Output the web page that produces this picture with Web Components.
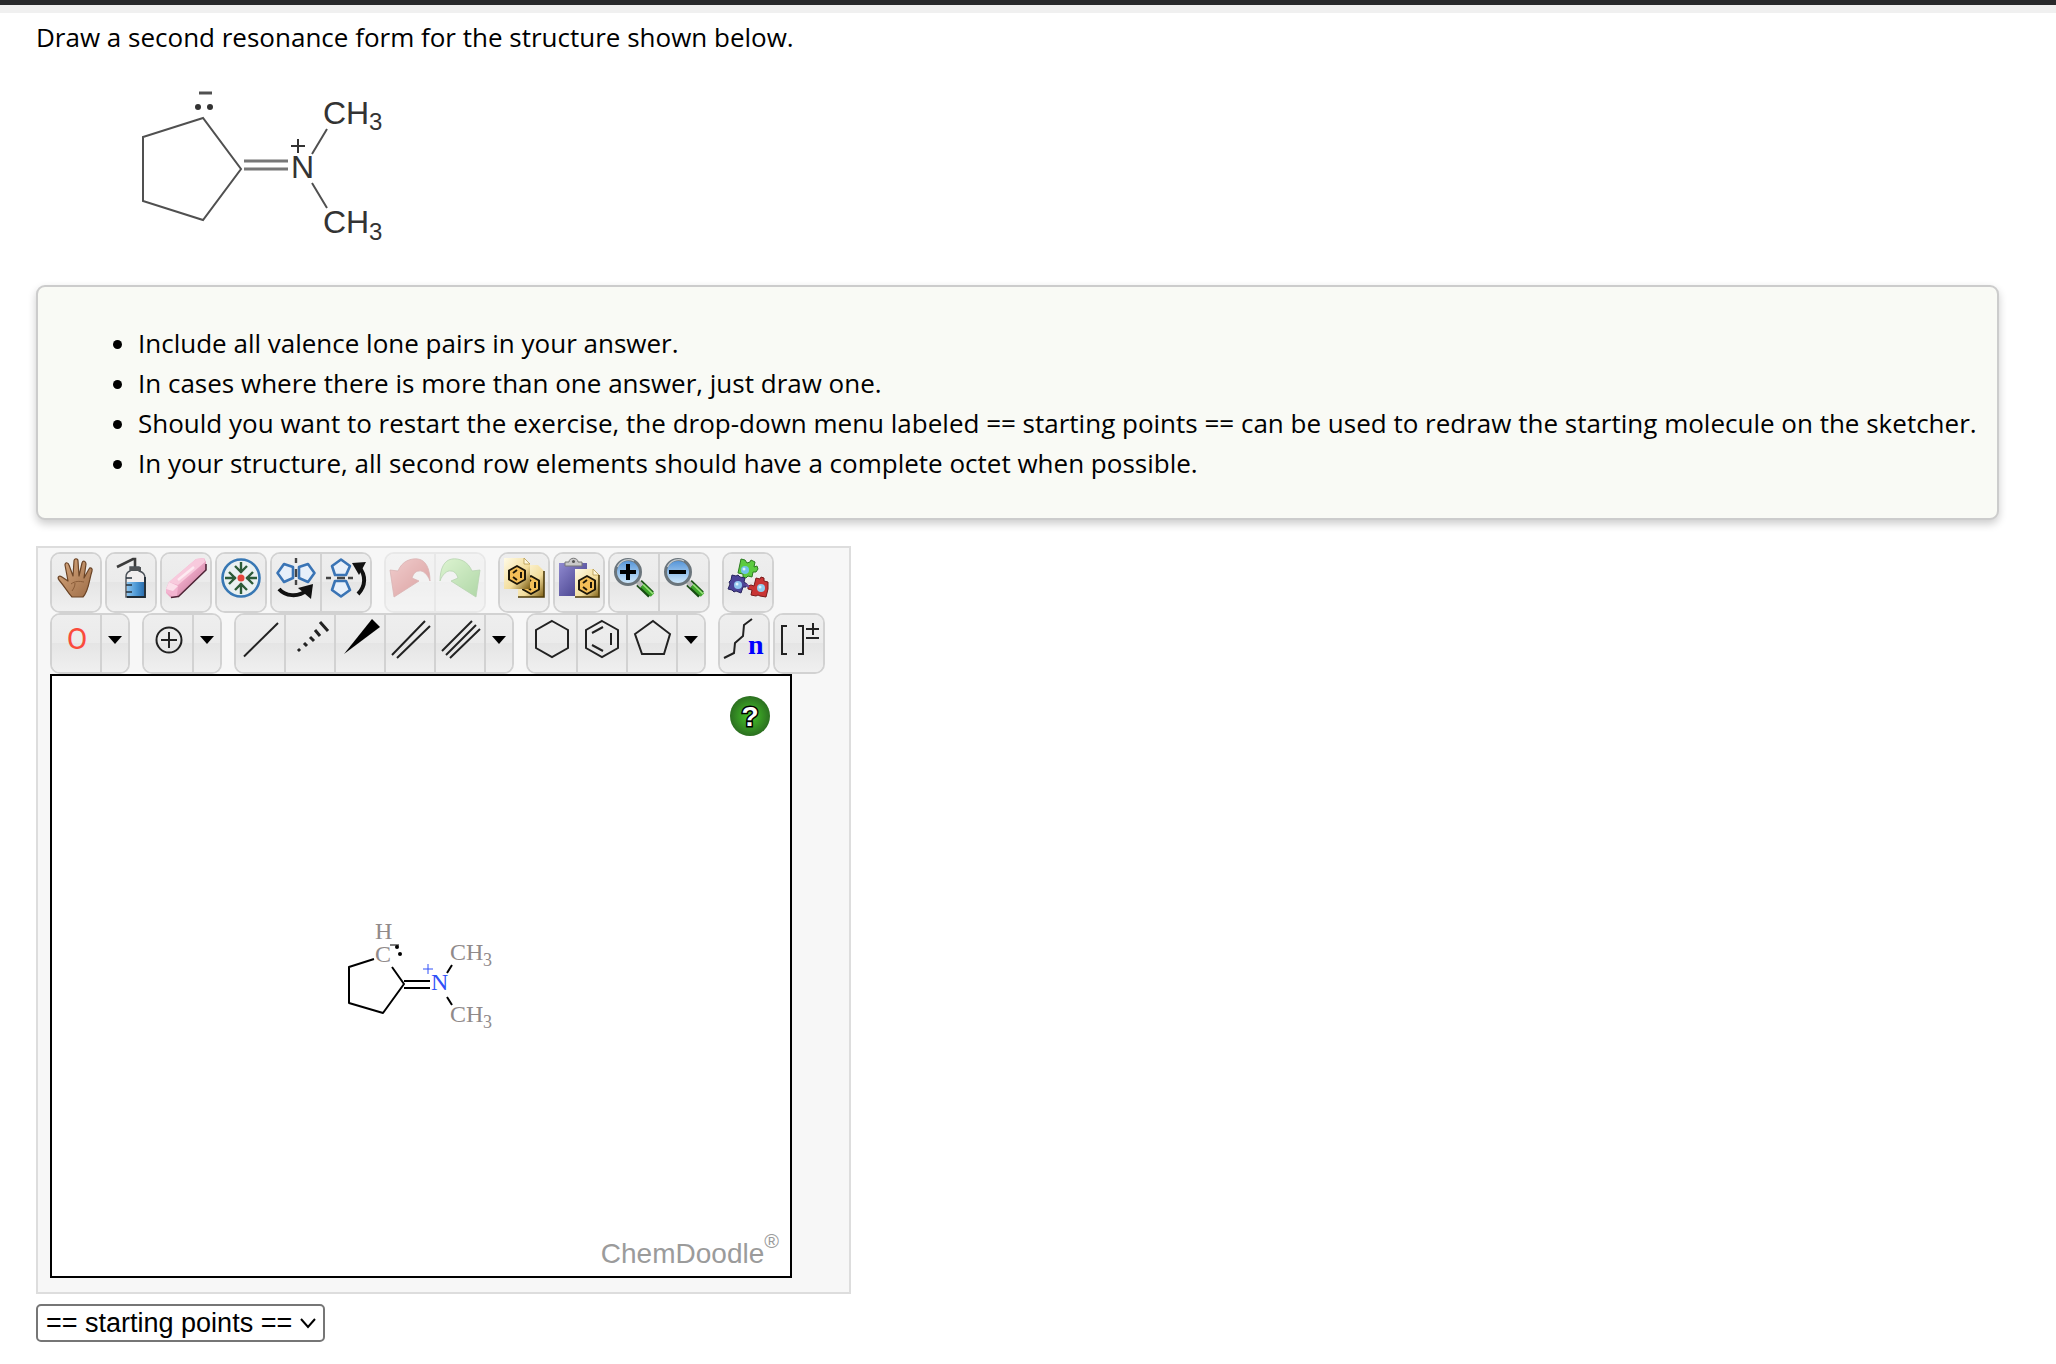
<!DOCTYPE html>
<html lang="en">
<head>
<meta charset="utf-8">
<title>Resonance form exercise</title>
<style>
  body {
    margin: 0;
    background: #fff;
    color: #000;
    font-family: "Open Sans", "Noto Sans", sans-serif;
    font-size: 26px;
    line-height: 40px;
  }
</style>
</head>
<body>
<exercise-page>
  <p slot="question">Draw a second resonance form for the structure shown below.</p>
  <structure-figure slot="figure"></structure-figure>
  <hint-box slot="hints">
    <ul>
      <li>Include all valence lone pairs in your answer.</li>
      <li>In cases where there is more than one answer, just draw one.</li>
      <li>Should you want to restart the exercise, the drop-down menu labeled == starting points == can be used to redraw the starting molecule on the sketcher.</li>
      <li>In your structure, all second row elements should have a complete octet when possible.</li>
    </ul>
  </hint-box>
  <molecule-sketcher slot="sketcher"></molecule-sketcher>
  <starting-points slot="sketcher"></starting-points>
</exercise-page>

<script>
const pentagonPair = `
  <g fill="#e8f0fa" stroke="#3a74b5" stroke-width="2.600" stroke-linejoin="round">
    <path d="M1.500 15 8 6l9 3v11l-9 4z"/><path d="M38.500 15 32 6l-9 3v11l9 4z"/>
  </g>
  <path d="M20 0v5M20 11v8M20 22v5" stroke="#444" stroke-width="2.400"/>`;

const benzene = (x, y) => `
  <g transform="translate(${x} ${y})" stroke="#1c1608" stroke-width="2" stroke-linejoin="round">
    <path d="M0-9 8-4.500v9L0 9l-8-4.500v-9z" fill="#f3be58"/>
    <path d="M4-3v6M-4-2 0-5M-4 2 0 5" fill="none"/>
  </g>`;

const lens = `
  <path d="M25 25 37 36.500" stroke="#174d12" stroke-width="8"/>
  <path d="M23 23l5 5" stroke="#b9b9b9" stroke-width="5"/>
  <path d="M28.500 27.500 38.500 37" stroke="#3da42b" stroke-width="5"/>
  <path d="M29 26.500l10 9.500" stroke="#9be07d" stroke-width="1.600"/>
  <circle cx="14" cy="14" r="12.500" fill="url(#glass)" stroke="#6b757c" stroke-width="3"/>
  <path d="M3.500 9A12 12 0 0 1 20 3" fill="none" stroke="#c3cacf" stroke-width="1.400"/>`;

const defs = `
  <defs>
    <linearGradient id="skin" x2="1" y2="1"><stop offset="0" stop-color="#d9aa80"/><stop offset="1" stop-color="#9c6b45"/></linearGradient>
    <linearGradient id="liquid"><stop offset="0" stop-color="#8cc4ee"/><stop offset=".6" stop-color="#4794d2"/><stop offset="1" stop-color="#2d6fae"/></linearGradient>
    <linearGradient id="pink" x2="1" y2="1"><stop offset="0" stop-color="#fbe0ec"/><stop offset=".45" stop-color="#f0acc9"/><stop offset="1" stop-color="#b5668b"/></linearGradient>
    <linearGradient id="red" x2="1" y2="1"><stop offset="0" stop-color="#e88f8f"/><stop offset="1" stop-color="#b02020"/></linearGradient>
    <linearGradient id="green" x2="1" y2="1"><stop offset="0" stop-color="#b8f09a"/><stop offset="1" stop-color="#46a830"/></linearGradient>
    <linearGradient id="gold" x2="1" y2="1"><stop offset="0" stop-color="#fffbe6"/><stop offset=".6" stop-color="#f3dd9c"/><stop offset="1" stop-color="#7a5c12"/></linearGradient>
    <linearGradient id="board" x2="1" y2="1"><stop offset="0" stop-color="#8f89cf"/><stop offset="1" stop-color="#3d3884"/></linearGradient>
    <linearGradient id="glass" x2="0" y2="1"><stop offset="0" stop-color="#4f90d6"/><stop offset="1" stop-color="#d4ecfd"/></linearGradient>
  </defs>`;

const icons = {
  hand: `
    <path d="M16 39C12 35 9 29 3 22c-2-3 0-5 3-3l6 4L9 7c0-3 3-3 4 0l4 11 1-15c0-3 4-3 4 0l1 15 3-13c1-3 4-2 4 1l-2 14 5-9c1-2 4-1 3 2-3 9-3 20-9 26z" fill="url(#skin)" stroke="#6b4426" stroke-width="1.200" stroke-linejoin="round"/>
    <path d="M15 26c4-3 8-3 13-2M16 33c2-3 3-5 3-8" fill="none" stroke="#8a5c38"/>`,
  bottle: `
    <path d="M6 9 22 1h2v11" fill="none" stroke="#3c3c3c" stroke-width="2.600"/>
    <path d="M19 9h9v4c4 1 6 4 6 7v19H15V19c0-3 1-5 4-6z" fill="#f1eeee" stroke="#4a5158" stroke-width="1.400"/>
    <path d="M16 24h17v14H16z" fill="url(#liquid)"/>
    <path d="M19 9h11v4H19z" fill="#505356"/>
    <path d="M34 19v20H16" fill="none" stroke="#1f2a33" stroke-width="1.800"/>
    <path d="M15 20h6M15 27h6M15 34h6" stroke="#26323c" stroke-width="1.600"/>`,
  eraser: `
    <path d="M0 31 3 24 30 1l8-1 2 4v8L12 39l-7 1-5-5z" fill="url(#pink)"/>
    <path d="M3 24 30 1l8-1 1 4L12 27z" fill="#f8cadd"/>
    <path d="M3 24l9 4-1 10-4 1-7-5v-3z" fill="#f3b4d0"/>
    <path d="M0 31l3-7 9 4-5 5z" fill="#fbdfea"/>
    <path d="M12 39 40 12V6M5 39.500l7-1" fill="none" stroke="#4d2436" stroke-width="1.600"/>
    <path d="M12 22 28 9" stroke="#fdeaf1" stroke-width="2.400"/>`,
  clean: `
    <circle cx="20" cy="20" r="18.500" fill="#eaf1f1" stroke="#3878b4" stroke-width="2.600"/>
    <g fill="none" stroke="#2c5b38" stroke-width="2.400">
      <path d="M20 4v11M14 8l6 6 6-6M20 36V25M14 32l6-6 6 6M4 20h11M8 14l6 6-6 6M36 20H25M32 14l-6 6 6 6"/>
    </g>
    <circle cx="20" cy="20" r="3.500" fill="#e5453b"/>`,
  flipH: pentagonPair + `
    <path d="M3 31C9 38 22 40 31 32" fill="none" stroke="#111" stroke-width="4"/>
    <path d="M22 30l15-4-2 15z" fill="#111"/>`,
  flipV: `
    <g transform="matrix(0 1 1 0 0 0)">${pentagonPair}</g>
    <path d="M32 36C40 28 40 17 33 9" fill="none" stroke="#111" stroke-width="4"/>
    <path d="M26 5l14-1-7 13z" fill="#111"/>`,
  undo: `<path d="M0 12l8 1C12 3 21 0 28 1c8 1 12 10 12 22-2-6-7-11-11-10-4 0-6 4-7 7l7 3L4 39z" fill="url(#red)" stroke="#b05050" stroke-width=".8"/>`,
  redo: `<path d="M40 12l-8 1C28 3 19 0 12 1 4 2 0 11 0 23c2-6 7-11 11-10 4 0 6 4 7 7l-7 3 25 16z" fill="url(#green)" stroke="#58a048" stroke-width=".8"/>`,
  copy: `
    <path d="M14 7h20l6 6v26H14z" fill="url(#gold)"/><path d="M14 39h26V13" fill="none" stroke="#4e3b0a" stroke-width="1.600"/>` +
    benzene(27, 27) + `
    <path d="M0 0h20l6 6v25H0z" fill="url(#gold)"/><path d="M20 0v6h6z" fill="#fff8dd" stroke="#b69a50" stroke-width=".8"/>` +
    benzene(13, 17),
  paste: `
    <path d="M0 5h28v33H0z" fill="url(#board)"/>
    <path d="M6 8V4h4c0-5 9-5 9 0h4v4z" fill="#c9c9c9" stroke="#777"/><circle cx="14.500" cy="3.500" r="1.500" fill="#555"/>
    <path d="M16 11h18l6 6v22H16z" fill="url(#gold)"/><path d="M34 11v6h6z" fill="#fff8dd" stroke="#b69a50" stroke-width=".8"/>
    <path d="M16 39h24V17" fill="none" stroke="#4e3b0a" stroke-width="1.600"/>` +
    benzene(28, 27),
  zoomIn: lens + `<path d="M14 6v16M6 14h16" stroke="#000" stroke-width="4"/>`,
  zoomOut: lens + `<path d="M5 14h17" stroke="#000" stroke-width="4"/>`,
  templates: `
    <path d="M13 1l4 1 2 3 3-1 1-2 4 2-1 5 3-1 1 3-2 3-3 0-1 5-4-1-2 2-3-1 0-3-5-1z" fill="#5ccb40" stroke="#2c7a20"/>
    <path d="M4 17l4 1 2-1 2 2 5 1-1 4 3 2-1 3-3 0-2 6-5-2-2 1-2-2-4-1 2-5-1-2 2-2z" fill="#4c4498" stroke="#28235e"/>
    <path d="M28 20l4 1 1-2 3 1 0 3 4 1v7l-2 8-6-1-2-1-2 1-5-1 1-5-4-1 0-3 3-1 3 1z" fill="#c93434" stroke="#781919"/>
    <path d="M18 26l3 3" stroke="#6c4a9a" stroke-width="2"/>
    <circle cx="17" cy="12" r="4" fill="#72c3e8"/><circle cx="10" cy="27" r="4" fill="#8fc4ef"/><circle cx="33" cy="30" r="4" fill="#8fcdee"/>
    <circle cx="16" cy="11" r="1.500" fill="#d8f1fb"/><circle cx="9" cy="26" r="1.500" fill="#e0f1fc"/><circle cx="32" cy="29" r="1.500" fill="#e0f1fc"/>`,
  atom: `<text x="21" y="30" text-anchor="middle" font-family="Roboto, sans-serif" font-size="30" fill="#fa4b3c">O</text>`,
  arrow: `<path d="M2 17h14l-7 8z"/>`,
  charge: `<g fill="none" stroke="#222" stroke-width="2"><circle cx="21" cy="21" r="12.500"/><path d="M21 13v16M13 21h16"/></g>`,
  single: `<path d="M4 37.500 38 4" stroke="#222" stroke-width="2"/>`,
  recessed: `<path d="M8 30l2 2M14 24l3 3M20 18l4 4M25 11l5 6M30 3l8 9" stroke="#222" stroke-width="3"/>`,
  wedge: `<path d="M4 35 32 0l8 8z"/>`,
  double: `<path d="M2 36 35 2M7 39 40 7" stroke="#222" stroke-width="2"/>`,
  triple: `<path d="M2 32 32 2M6 36 36 6M10 39 40 10" stroke="#222" stroke-width="2"/>`,
  hexagon: `<path d="M20 2l16 9v18l-16 9-16-9V11z" fill="none" stroke="#222" stroke-width="2"/>`,
  aromatic: `<path d="M20 2l16 9v18l-16 9-16-9V11zM29 14v12M10 14l11-6M10 26l11 6" fill="none" stroke="#222" stroke-width="2"/>`,
  pentagon: `<path d="M21 2l17 13-6 20H10L3 15z" fill="none" stroke="#222" stroke-width="2"/>`,
  chain: `
    <path d="M0 39l10-5 1-10 8-7 1-11 8-6" fill="none" stroke="#222" stroke-width="2"/>
    <text x="24" y="35" font-family="Liberation Serif, serif" font-weight="bold" font-size="28" fill="#00f">n</text>`,
  bracket: `
    <path d="M8 7H3v28h5M19 7h5v28h-5" fill="none" stroke="#222" stroke-width="2"/>
    <path d="M34 4v12M27 10h13M27 19h13" stroke="#222" stroke-width="2"/>`
};

// One tool of the toolbar, drawn by the name of its icon
class ToolButton extends HTMLElement {
  constructor() {
    super();
    this.attachShadow({mode: "open"});
  }

  connectedCallback() {
    const name = this.getAttribute("icon");
    const width = name === "arrow" ? 18 : 40;
    this.shadowRoot.innerHTML = `
      <style>
        :host {
          display: block;
        }

        button {
          display: block;
          margin: 0;
          border: 0;
          padding: 4px 4px 13px;
          background: linear-gradient(#eee, #ebebeb 50%, #e5e5e5 50%, #f0f0f0);
          cursor: pointer;
        }

        svg {
          display: block;
          overflow: visible;
        }
      </style>
      <button type="button" aria-label="${this.getAttribute("label")}" ${this.hasAttribute("disabled") ? "disabled" : ""}>
        <svg width="${width}" height="40" viewBox="0 0 ${width} 40">${defs}${icons[name]}</svg>
      </button>
    `;
  }
}

customElements.define("tool-button", ToolButton);


// Tools that share one rounded frame
class ToolGroup extends HTMLElement {
  constructor() {
    super();
    this.attachShadow({mode: "open"}).innerHTML = `
      <style>
        :host {
          display: flex;
          border: 2px solid #d2d2d2;
          border-radius: 10px;
          overflow: hidden;
        }

        :host([faded]) {
          opacity: 0.4;
        }

        ::slotted(:not(:first-child)) {
          border-left: 2px solid #d2d2d2;
        }
      </style>
      <slot></slot>
    `;
  }
}

customElements.define("tool-group", ToolGroup);


class ToolBar extends HTMLElement {
  constructor() {
    super();
    this.attachShadow({mode: "open"}).innerHTML = `
      <style>
        :host {
          display: flex;
          gap: 3px;
        }

        ::slotted([apart]) {
          margin-left: 9px;
        }
      </style>
      <slot></slot>
    `;
  }
}

customElements.define("tool-bar", ToolBar);


// The drawing area with its current molecule
class SketchCanvas extends HTMLElement {
  constructor() {
    super();
    this.attachShadow({mode: "open"}).innerHTML = `
      <style>
        :host {
          display: block;
          position: relative;
          width: fit-content;
          border: 2px solid #000;
          background: #fff;
        }

        svg {
          display: block;
        }

        .help {
          position: absolute;
          top: 20px;
          right: 20px;
          border: 0;
          padding: 0;
          background: none;
          cursor: pointer;
        }

        .brand {
          position: absolute;
          right: 11px;
          bottom: 2px;
          color: #9b9b9b;
          font: 28px/40px "Liberation Sans", Arial, sans-serif;
        }

        sup {
          font-size: 20px;
          line-height: 0;
          vertical-align: 15px;
        }
      </style>
      <svg width="738" height="600" viewBox="0 0 738 600" font-family="Liberation Serif, serif" font-size="24">
        <g fill="none" stroke="#000" stroke-width="2">
          <path d="M322 283 297 291v36l34 10 21-29-12-17" stroke-linejoin="round"/>
          <path d="M352 305h26M352 312h26M400 289l-5 8M395 321l5 8"/>
          <path d="M338 269h9" stroke-width="1"/>
        </g>
        <circle cx="345" cy="271" r="2"/><circle cx="348" cy="278" r="2"/>
        <g fill="#908a8a">
          <text x="323" y="263">H</text>
          <text x="323" y="286">C</text>
          <text x="398" y="284">CH</text><text x="431" y="290" font-size="18">3</text>
          <text x="398" y="346">CH</text><text x="431" y="352" font-size="18">3</text>
        </g>
        <text x="379" y="314" fill="#3050f8">N</text>
        <path d="M371 293h10M376 288v10" stroke="#3050f8"/>
      </svg>
      <button class="help" type="button" aria-label="Help">
        <svg width="40" height="40" viewBox="0 0 40 40">
          <defs><radialGradient id="ball"><stop offset="0" stop-color="#46c828"/><stop offset="1" stop-color="#2b6f20"/></radialGradient></defs>
          <circle cx="20" cy="20" r="20" fill="url(#ball)"/>
          <text x="20" y="30" text-anchor="middle" font-family="Liberation Sans, sans-serif" font-weight="bold" font-size="28" fill="#fff" stroke="#000" stroke-width="3" paint-order="stroke">?</text>
        </svg>
      </button>
      <span class="brand">ChemDoodle<sup>®</sup></span>
    `;
  }
}

customElements.define("sketch-canvas", SketchCanvas);


class MoleculeSketcher extends HTMLElement {
  constructor() {
    super();
    this.attachShadow({mode: "open"}).innerHTML = `
      <style>
        :host {
          display: block;
          width: fit-content;
          margin-top: 26px;
          border: 2px solid #ddd;
          padding: 4px 24px 14px 12px;
          background: #f7f7f7;
        }
      </style>
      <tool-bar>
        <tool-group><tool-button icon="hand" label="Move"></tool-button></tool-group>
        <tool-group><tool-button icon="bottle" label="Clear"></tool-button></tool-group>
        <tool-group><tool-button icon="eraser" label="Erase"></tool-button></tool-group>
        <tool-group><tool-button icon="clean" label="Clean"></tool-button></tool-group>
        <tool-group>
          <tool-button icon="flipH" label="Flip horizontally"></tool-button>
          <tool-button icon="flipV" label="Flip vertically"></tool-button>
        </tool-group>
        <tool-group faded apart>
          <tool-button icon="undo" label="Undo" disabled></tool-button>
          <tool-button icon="redo" label="Redo" disabled></tool-button>
        </tool-group>
        <tool-group apart><tool-button icon="copy" label="Copy"></tool-button></tool-group>
        <tool-group><tool-button icon="paste" label="Paste"></tool-button></tool-group>
        <tool-group>
          <tool-button icon="zoomIn" label="Zoom in"></tool-button>
          <tool-button icon="zoomOut" label="Zoom out"></tool-button>
        </tool-group>
        <tool-group apart><tool-button icon="templates" label="Templates"></tool-button></tool-group>
      </tool-bar>
      <tool-bar>
        <tool-group>
          <tool-button icon="atom" label="Oxygen"></tool-button>
          <tool-button icon="arrow" label="More elements"></tool-button>
        </tool-group>
        <tool-group apart>
          <tool-button icon="charge" label="Increase charge"></tool-button>
          <tool-button icon="arrow" label="More attributes"></tool-button>
        </tool-group>
        <tool-group apart>
          <tool-button icon="single" label="Single bond"></tool-button>
          <tool-button icon="recessed" label="Recessed bond"></tool-button>
          <tool-button icon="wedge" label="Protruding bond"></tool-button>
          <tool-button icon="double" label="Double bond"></tool-button>
          <tool-button icon="triple" label="Triple bond"></tool-button>
          <tool-button icon="arrow" label="More bonds"></tool-button>
        </tool-group>
        <tool-group apart>
          <tool-button icon="hexagon" label="Cyclohexane ring"></tool-button>
          <tool-button icon="aromatic" label="Benzene ring"></tool-button>
          <tool-button icon="pentagon" label="Cyclopentane ring"></tool-button>
          <tool-button icon="arrow" label="More rings"></tool-button>
        </tool-group>
        <tool-group apart><tool-button icon="chain" label="Chain"></tool-button></tool-group>
        <tool-group><tool-button icon="bracket" label="Bracket"></tool-button></tool-group>
      </tool-bar>
      <sketch-canvas></sketch-canvas>
    `;
  }
}

customElements.define("molecule-sketcher", MoleculeSketcher);


class StartingPoints extends HTMLElement {
  constructor() {
    super();
    this.attachShadow({mode: "open"}).innerHTML = `
      <style>
        :host {
          display: grid;
          width: fit-content;
          align-items: center;
          margin-top: 10px;
        }

        select, svg {
          grid-area: 1 / 1;
        }

        select {
          appearance: none;
          box-sizing: border-box;
          height: 38px;
          margin: 0;
          border: 2px solid #767676;
          border-radius: 5px;
          padding: 0 30px 0 8px;
          background: #fff;
          color: #000;
          font: 27px/34px "Liberation Sans", Arial, sans-serif;
        }

        svg {
          justify-self: end;
          margin-right: 8px;
          pointer-events: none;
        }
      </style>
      <select aria-label="Starting points">
        <option>== starting points ==</option>
      </select>
      <svg width="18" height="12" viewBox="0 0 18 12"><path d="M2 2l7 8 7-8" fill="none" stroke="#000" stroke-width="2"/></svg>
    `;
  }
}

customElements.define("starting-points", StartingPoints);


class HintBox extends HTMLElement {
  constructor() {
    super();
    this.attachShadow({mode: "open"}).innerHTML = `
      <style>
        :host {
          display: block;
          border: 2px solid #ccc;
          border-radius: 9px;
          padding: 36px 20px 35px;
          background: #f9faf5;
          box-shadow: 0 4px 8px rgba(0, 0, 0, 0.2);
        }

        ::slotted(ul) {
          margin: 0;
          padding: 0 0 0 80px;
        }
      </style>
      <slot></slot>
    `;
  }
}

customElements.define("hint-box", HintBox);


// The molecule that the question asks about
class StructureFigure extends HTMLElement {
  constructor() {
    super();
    this.attachShadow({mode: "open"}).innerHTML = `
      <style>
        :host {
          display: block;
          margin: 20px 0 28px;
        }

        svg {
          display: block;
        }
      </style>
      <svg width="360" height="180" viewBox="0 0 360 180" font-family="Liberation Sans, Arial, sans-serif" font-size="32" fill="#333">
        <g fill="none" stroke="#505050" stroke-width="2">
          <path d="M167 41 107 60v64l60 19 38-51z"/>
          <path d="M208 84h44M208 92h44" stroke="#777" stroke-width="3"/>
          <path d="M291 52l-15 25M276 106l15 25"/>
          <path d="M163 16h13" stroke-width="3"/>
          <path d="M255 69h14M262 62v14" stroke="#333"/>
        </g>
        <circle cx="162" cy="30" r="3"/><circle cx="174" cy="30" r="3"/>
        <text x="255" y="101">N</text>
        <text x="287" y="47">CH</text><text x="333" y="53" font-size="24">3</text>
        <text x="287" y="156">CH</text><text x="333" y="163" font-size="24">3</text>
      </svg>
    `;
  }
}

customElements.define("structure-figure", StructureFigure);


class ExercisePage extends HTMLElement {
  constructor() {
    super();
    this.attachShadow({mode: "open"}).innerHTML = `
      <style>
        :host {
          display: block;
        }

        header {
          height: 5px;
          border-bottom: 8px solid #f0f0f0;
          background: #28292b;
        }

        main {
          padding: 4px 57px 22px 36px;
        }

        ::slotted(p) {
          margin: 0;
        }
      </style>
      <header></header>
      <main>
        <slot name="question"></slot>
        <slot name="figure"></slot>
        <slot name="hints"></slot>
        <slot name="sketcher"></slot>
      </main>
    `;
  }
}

customElements.define("exercise-page", ExercisePage);
</script>
</body>
</html>
